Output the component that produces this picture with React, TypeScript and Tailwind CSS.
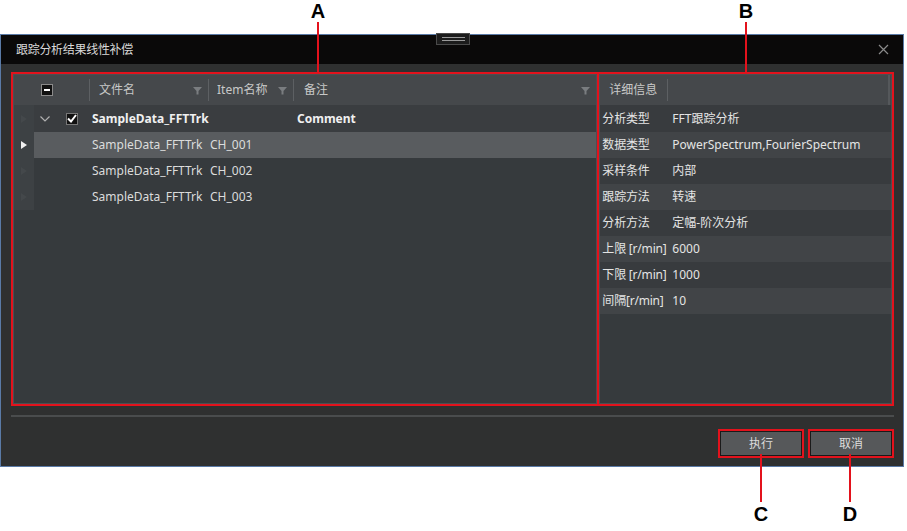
import React from "react";

const FONT = '"Noto Sans", "Noto Sans CJK SC", sans-serif';

function Filter() {
  return (
    <svg width="9" height="9" viewBox="0 0 9 9" className="shrink-0">
      <polygon points="0,1 9,1 5.5,5 5.5,8.5 3.5,8.5 3.5,5" fill="#7a7d80" />
    </svg>
  );
}

function RowArrow({ on }: { on?: boolean }) {
  return (
    <svg width="6" height="8" viewBox="0 0 6 8">
      <polygon points="0,0 6,4 0,8" fill={on ? "#f0f0f0" : "#44484b"} />
    </svg>
  );
}

const details: [string, string][] = [
  ["分析类型", "FFT跟踪分析"],
  ["数据类型", "PowerSpectrum,FourierSpectrum"],
  ["采样条件", "内部"],
  ["跟踪方法", "转速"],
  ["分析方法", "定幅-阶次分析"],
  ["上限 [r/min]", "6000"],
  ["下限 [r/min]", "1000"],
  ["间隔[r/min]", "10"],
];

export default function App() {
  return (
    <div
      className="relative w-[907px] h-[531px] bg-white overflow-hidden"
      style={{ fontFamily: FONT }}
    >
      <div className="pt-[34px]">
        <div className="w-[904px] h-[433px] border border-[#5a7aa6] flex flex-col">
          {/* title bar */}
          <div className="relative h-[29px] bg-[#0a0909] flex items-center pl-[15px] pr-[14px]">
            <span className="text-[12px] text-[#d8d8d8] tracking-[-0.3px]">跟踪分析结果线性补偿</span>
            <div className="flex-1" />
            <svg width="11" height="11" viewBox="0 0 11 11">
              <path d="M1 1 L10 10 M10 1 L1 10" stroke="#8a8a8a" strokeWidth="1.2" />
            </svg>
            <div className="absolute left-[435px] top-[-2px] w-[34px] h-[12px] bg-[#1c1c1c] border border-[#4a4a4a] flex items-center justify-center">
              <div className="w-[23px] h-[4px] border-y border-[#9a9a9a]" />
            </div>
          </div>
          {/* body */}
          <div className="flex-1 bg-[#2f3030] pl-[10px] pr-[9px] pt-[8px] flex flex-col">
            <div className="flex h-[334px]">
              {/* Panel A */}
              <div className="w-[589px] border-2 border-[#e3121c] bg-[#363a3d] flex flex-col">
                <div className="flex-1 border border-[#4c4f52] flex flex-col">
                  {/* header */}
                  <div className="h-[30px] bg-[#45484b] flex items-center text-[12px] text-[#c8c8c8]">
                    <div className="w-[20px] h-full bg-[#45484b]" />
                    <div className="w-[22px] h-full" />
                    <div className="w-[33px] h-full flex items-center">
                      <div className="w-[12px] h-[12px] bg-[#111] border border-[#8a8a8a] flex items-center justify-center -ml-[15px]">
                        <div className="w-[6px] h-[2px] bg-white" />
                      </div>
                    </div>
                    <div className="w-[1px] h-[22px] bg-[#5d6063]" />
                    <div className="w-[118px] h-full flex items-center pl-[9px] pr-[6px]">
                      <span className="flex-1">文件名</span>
                      <Filter />
                    </div>
                    <div className="w-[1px] h-[22px] bg-[#5d6063]" />
                    <div className="w-[84px] h-full flex items-center pl-[8px] pr-[6px]">
                      <span className="flex-1">Item名称</span>
                      <Filter />
                    </div>
                    <div className="w-[1px] h-[22px] bg-[#5d6063]" />
                    <div className="flex-1 h-full flex items-center pl-[10px] pr-[6px]">
                      <span className="flex-1">备注</span>
                      <Filter />
                    </div>
                  </div>
                  {/* rows */}
                  <div className="flex flex-col text-[12px] text-[#dcdcdc]">
                    <div className="h-[27px] flex items-center bg-[#3a3d40]">
                      <div className="w-[20px] h-full bg-[#3d4144] flex items-center justify-center">
                        <RowArrow />
                      </div>
                      <div className="w-[22px] flex justify-center">
                        <svg width="10" height="6" viewBox="0 0 10 6">
                          <path d="M0.5 0.5 L5 5 L9.5 0.5" stroke="#b0b0b0" strokeWidth="1.2" fill="none" />
                        </svg>
                      </div>
                      <div className="w-[10px]" />
                      <div className="w-[12px] h-[12px] bg-[#111] border border-[#777] flex items-center justify-center">
                        <svg width="10" height="9" viewBox="0 0 10 9">
                          <path d="M1 4.5 L4 7.5 L9 1" stroke="#fff" strokeWidth="2" fill="none" />
                        </svg>
                      </div>
                      <div className="w-[14px]" />
                      <div className="w-[205px] font-bold text-[#f0f0f0]">SampleData_FFTTrk</div>
                      <div className="font-bold text-[#f0f0f0]">Comment</div>
                    </div>
                    {["CH_001", "CH_002", "CH_003"].map((ch, i) => (
                      <div key={ch} className={`h-[26px] flex items-center ${i === 0 ? "bg-[#595c5f]" : "bg-[#363a3d]"}`}>
                        <div className="w-[20px] h-full bg-[#3d4144] flex items-center justify-center">
                          <RowArrow on={i === 0} />
                        </div>
                        <div className="w-[58px]" />
                        <div className="w-[118px]">SampleData_FFTTrk</div>
                        <div>{ch}</div>
                      </div>
                    ))}
                  </div>
                </div>
              </div>
              {/* Panel B */}
              <div className="w-[295px] border-y-2 border-r-2 border-[#e3121c] bg-[#363a3d] flex flex-col">
                <div className="flex-1 border border-[#4c4f52] flex flex-col">
                  <div className="h-[30px] bg-[#45484b] flex items-center text-[12px] text-[#c8c8c8]">
                    <div className="w-[67px] pl-[9px]">详细信息</div>
                    <div className="w-[1px] h-[22px] bg-[#5d6063]" />
                    <div className="flex-1" />
                    <div className="w-[2px] h-full bg-[#55585b] mr-[1px]" />
                  </div>
                  <div className="flex flex-col text-[12px] text-[#e4e4e4]">
                    {details.map(([k, v], i) => (
                      <div
                        key={k}
                        className={`${i === 0 ? "h-[27px]" : "h-[26px]"} flex items-center pl-[2px] ${i % 2 === 0 ? "bg-[#383b3e]" : "bg-[#414447]"}`}
                      >
                        <div className="w-[70px] whitespace-nowrap tracking-[-0.2px]">{k}</div>
                        <div className="whitespace-nowrap">{v}</div>
                      </div>
                    ))}
                  </div>
                </div>
              </div>
            </div>
            {/* separator */}
            <div className="mt-[9px] h-[2px] bg-[#4a4c4d] w-[883px]" />
            {/* buttons */}
            <div className="flex justify-end w-[883px] mt-[12px] gap-[4px]">
              {["执行", "取消"].map((t) => (
                <div key={t} className="border-2 border-[#e3121c] p-0">
                  <div className="w-[82px] h-[25px] bg-[#56585a] border border-[#1a1a1a] flex items-center justify-center text-[12px] text-[#dcdcdc]">
                    {t}
                  </div>
                </div>
              ))}
            </div>
          </div>
        </div>
      </div>

      {/* annotations */}
      <div className="absolute left-[308px] top-[1px] w-[20px] text-center text-[20px] font-bold text-black leading-none" style={{ fontFamily: '"Liberation Sans", sans-serif' }}>A</div>
      <div className="absolute left-[317px] top-[22px] w-[2px] h-[50px] bg-[#e3121c]" />
      <div className="absolute left-[736px] top-[1px] w-[20px] text-center text-[20px] font-bold text-black leading-none" style={{ fontFamily: '"Liberation Sans", sans-serif' }}>B</div>
      <div className="absolute left-[745px] top-[22px] w-[2px] h-[50px] bg-[#e3121c]" />
      <div className="absolute left-[760px] top-[454px] w-[2px] h-[48px] bg-[#e3121c]" />
      <div className="absolute left-[751px] top-[504px] w-[20px] text-center text-[20px] font-bold text-black leading-none" style={{ fontFamily: '"Liberation Sans", sans-serif' }}>C</div>
      <div className="absolute left-[849px] top-[454px] w-[2px] h-[48px] bg-[#e3121c]" />
      <div className="absolute left-[840px] top-[504px] w-[20px] text-center text-[20px] font-bold text-black leading-none" style={{ fontFamily: '"Liberation Sans", sans-serif' }}>D</div>
    </div>
  );
}
